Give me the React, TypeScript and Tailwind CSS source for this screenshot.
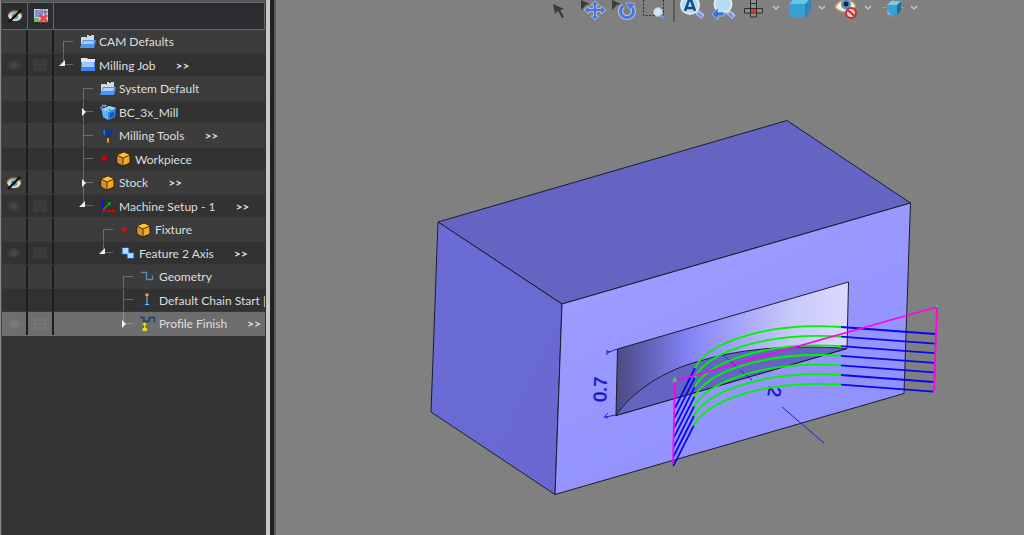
import type { ReactNode } from 'react'

type Joint = 'first' | 'mid' | 'last'

interface TreeItem {
  label: string
  depth: number
  joint: Joint
  icon: ReactNode
  arrow?: 'open' | 'closed'
  more?: boolean
  plus?: boolean
  eye?: 'dim' | 'off'
  grid?: boolean
  selected?: boolean
}

/* ---------- tree icons ---------- */

const OpenFolder = () => (
  <svg className="w-4 h-4 shrink-0" viewBox="0 0 16 16">
    <path d="M1 6V3h5l1 1V1h2v1h2V1h3v12H1z" fill="#d5dae2" />
    <path d="M3 6h13l-2 8H0z" fill="#4f93f5" />
    <path d="M4 7h10l-1 3H2z" fill="#a8d0ff" />
  </svg>
)

const Folder = () => (
  <svg className="w-4 h-4 shrink-0" viewBox="0 0 16 16">
    <path d="M1 1h6l1 1h7v12H1z" fill="#e3e6ec" />
    <path d="M1 5h14v9H1z" fill="#3f86f2" />
    <path d="M2 5h12v5H2z" fill="#9cc8ff" />
  </svg>
)

const Machine = () => (
  <svg className="w-4 h-4 shrink-0" viewBox="0 0 16 16">
    <path d="M2 5l7-3 7 2-1 9-6 3-6-3z" fill="#2f86e8" />
    <path d="M2 6l6 2v8l-5-3z" fill="#5fb4ff" />
    <path d="M2 5l7-3 7 2-7 4z" fill="#9fd4ff" />
    <circle cx="4" cy="4" r="2.500" fill="none" stroke="#8cc8ff" strokeWidth="2" strokeDasharray="1.4 1" />
    <path d="M8 5l4 1-3 1z" fill="#1d8f4a" />
    <path d="M10 9l4-1v4l-4 2z" fill="#1755ae" />
  </svg>
)

const MillTool = () => (
  <svg className="w-4 h-4 shrink-0" viewBox="0 0 16 16">
    <path d="M2 1h11v4h-1v2l-2 3H6L4 7V5H2z" fill="#123c7e" />
    <path d="M3 2l2 0v5l-1 0z" fill="#2c7fc4" />
    <path d="M7 10h2v4l-1 1-1-1z" fill="#e8a020" />
  </svg>
)

const Cube = () => (
  <svg className="w-4 h-4 shrink-0" viewBox="0 0 16 16">
    <path d="M8 1l6 3v8l-7 3-6-3V4z" fill="#f5a922" stroke="#2a1c00" />
    <path d="M1.500 4.500L7 7v7.500l-5.500-3z" fill="#d8902a" />
    <path d="M1.500 4L8 1.500 13.500 4 7 6.500z" fill="#ffc03a" />
    <path d="M1 4l6 3 7-3M7 7v8" fill="none" stroke="#3a2600" strokeWidth="0.900" />
  </svg>
)

const Axes = () => (
  <svg className="w-4 h-4 shrink-0" viewBox="0 0 16 16">
    <path d="M2.500 13V3" stroke="#0a0aff" strokeWidth="1.600" />
    <path d="M.5 4l2-3.500L4.500 4z" fill="#0a0aff" />
    <path d="M3 12l6-6" stroke="#10a020" strokeWidth="1.600" />
    <path d="M7 4.500l4-.5-.5 4z" fill="#10a020" />
    <path d="M2 13h10" stroke="#e00000" strokeWidth="1.600" />
    <path d="M12 11l4 2-4 2z" fill="#e00000" />
  </svg>
)

const Feature = () => (
  <svg className="w-4 h-4 shrink-0" viewBox="0 0 16 16">
    <path d="M2 2.500h7v5h5v6H7v-4H2z" fill="#8fc2ff" stroke="#1c4fa0" />
    <path d="M3 3h5v5H3zM8 9h5v4H8z" fill="#b5dbff" />
  </svg>
)

const Geometry = () => (
  <svg className="w-4 h-4 shrink-0" viewBox="0 0 16 16">
    <path d="M1 3.500h5.500v7h6v-4" fill="none" stroke="#4a90c8" strokeWidth="1.300" />
  </svg>
)

const ChainStart = () => (
  <svg className="w-4 h-4 shrink-0" viewBox="0 0 16 16">
    <circle cx="7" cy="3" r="1.800" fill="#f0a030" />
    <path d="M7 5v8" stroke="#4f9cd0" strokeWidth="1.500" />
    <path d="M5 12h4v1H5z" fill="#7cc0ee" />
    <path d="M0 14h14" stroke="#123c78" strokeWidth="1.500" />
  </svg>
)

const Profile = () => (
  <svg className="w-4 h-4 shrink-0" viewBox="0 0 16 16">
    <path d="M0 1.500h4v4h5v-3h1v-1h4.500v5" fill="none" stroke="#173e78" strokeWidth="1.500" />
    <path d="M4.500 6l2.500 3H5.500v3h1.500v3H2.500v-3H4V9H2z" fill="#e0d828" />
  </svg>
)

const EyeOff = () => (
  <svg className="w-4 h-4" viewBox="0 0 16 16">
    <path d="M1 8c1-4 4-4 7-4s6 1 7 4c-1 4-4 5-7 5S2 11 1 8z" fill="#e9dcc0" />
    <path d="M1 7c2-3 4-4 7-4s5 1 7 4" fill="none" stroke="#a87c48" strokeWidth="1.500" />
    <circle cx="8" cy="8" r="3.500" fill="#58a9d0" />
    <circle cx="8" cy="8" r="1.500" fill="#102a3a" />
    <path d="M2 14L14 2" stroke="#080808" strokeWidth="2" />
  </svg>
)

const EyeDim = () => (
  <svg className="w-4 h-4" viewBox="0 0 16 16">
    <path d="M1 8c1-3 4-5 7-5s6 2 7 5c-1 3-4 5-7 5S2 11 1 8z" className="fill-white/5" />
    <circle cx="8" cy="8" r="3" className="fill-white/5" />
  </svg>
)

const GridDim = () => (
  <svg className="w-4 h-4" viewBox="0 0 16 16">
    <path d="M1 2h14v12H1z" className="fill-white/5" />
    <path d="M1 6h14M1 10h14M6 2v12M10 2v12" className="stroke-black/5" />
  </svg>
)

const GridOff = () => (
  <svg className="w-4 h-4" viewBox="0 0 16 16">
    <path d="M1 1h14v13H1z" fill="#c6cbe4" />
    <path d="M2 2h6v7H2z" fill="#7f8fd8" />
    <path d="M1 10h5v4H1z" fill="#74b85c" />
    <path d="M9 1v6M12 1v6M9 4h6" stroke="#5b5f78" />
    <path d="M7 7l7 7M14 7l-7 7" stroke="#f04050" strokeWidth="3" />
  </svg>
)

const PAD = ['pl-[2px]', 'pl-[22px]', 'pl-[42px]', 'pl-[62px]']

const items: TreeItem[] = [
  { label: 'CAM Defaults', depth: 0, joint: 'first', icon: <OpenFolder /> },
  { label: 'Milling Job', depth: 0, joint: 'last', icon: <Folder />, arrow: 'open', more: true, eye: 'dim', grid: true },
  { label: 'System Default', depth: 1, joint: 'first', icon: <OpenFolder /> },
  { label: 'BC_3x_Mill', depth: 1, joint: 'mid', icon: <Machine />, arrow: 'closed' },
  { label: 'Milling Tools', depth: 1, joint: 'mid', icon: <MillTool />, more: true },
  { label: 'Workpiece', depth: 1, joint: 'mid', icon: <Cube />, plus: true },
  { label: 'Stock', depth: 1, joint: 'mid', icon: <Cube />, arrow: 'closed', more: true, eye: 'off' },
  { label: 'Machine Setup - 1', depth: 1, joint: 'last', icon: <Axes />, arrow: 'open', more: true, eye: 'dim', grid: true },
  { label: 'Fixture', depth: 2, joint: 'first', icon: <Cube />, plus: true },
  { label: 'Feature 2 Axis', depth: 2, joint: 'last', icon: <Feature />, arrow: 'open', more: true, eye: 'dim', grid: true },
  { label: 'Geometry', depth: 3, joint: 'first', icon: <Geometry /> },
  { label: 'Default Chain Start |', depth: 3, joint: 'mid', icon: <ChainStart /> },
  { label: 'Profile Finish', depth: 3, joint: 'last', icon: <Profile />, arrow: 'closed', more: true, eye: 'dim', grid: true, selected: true },
]

const Connector = ({ joint, arrow }: { joint: Joint; arrow?: 'open' | 'closed' }) => (
  <svg className="w-6 h-6 shrink-0" viewBox="0 0 24 24">
    <path
      d={joint === 'first' ? 'M7.500 24V11.500H17' : joint === 'mid' ? 'M7.500 0V24M7.500 11.500H17' : 'M7.500 0V11.500H17'}
      fill="none"
      className="stroke-white/25"
    />
    {arrow === 'open' && <path d="M9 7v6H3z" fill="#eeeeee" />}
    {arrow === 'closed' && <path d="M6 8l4 4-4 4z" fill="#eeeeee" />}
  </svg>
)

const TreeRow = ({ item }: { item: TreeItem }) => (
  <li
    className={`flex h-[23px] odd:h-6 border-b ${
      item.selected ? 'bg-[#6e6e6e] border-[#6e6e6e]' : 'odd:bg-[#3c3c3c] even:bg-[#323232] border-[#393939]'
    }`}
  >
    <div className="w-[26px] shrink-0 flex items-center justify-center border-r-2 border-[#1c1c1c]">
      {item.eye === 'off' && <EyeOff />}
      {item.eye === 'dim' && <EyeDim />}
    </div>
    <div className="w-[26px] shrink-0 flex items-center justify-center border-r-2 border-[#1c1c1c]">
      {item.grid && <GridDim />}
    </div>
    <div className={`flex-1 min-w-0 flex items-center overflow-hidden ${PAD[item.depth]}`}>
      <Connector joint={item.joint} arrow={item.arrow} />
      {item.plus && (
        <svg className="w-4 h-4 shrink-0" viewBox="0 0 16 16">
          <path d="M1 7.500h6M4 4.500v6" stroke="#f00000" strokeWidth="1.600" />
        </svg>
      )}
      {item.icon}
      <span className="pl-[3px] pt-px whitespace-nowrap">{item.label}</span>
      {item.more && <button className="ml-5 pt-px font-bold">&gt;&gt;</button>}
    </div>
  </li>
)

/* ---------- view toolbar ---------- */

const Chevron = () => (
  <svg className="w-2 h-[22px]" viewBox="0 0 8 22">
    <path d="M1 6l3 3 3-3" fill="none" stroke="#c4c4c4" strokeWidth="1.500" />
  </svg>
)

const Cursor = () => <path d="M1 0l9 4-4 1-5 5z" fill="#3c3c3c" />

interface Tool {
  name: string
  art: ReactNode
}

const pointerTools: Tool[] = [
  { name: 'Select', art: <path d="M4 4l11 5-4 1 4 7-2 1-4-7-3 3z" fill="#3a3a3a" /> },
  {
    name: 'Pan',
    art: (
      <>
        <Cursor />
        <path
          d="M15 1l4 4h-2.500v3.500H21V6l5 4-5 4v-2.500h-4.500V16H19l-4 4-4-4h2.500v-4.500H9V14l-5-4 5-4v2.500h4.500V5H11z"
          fill="#4577d8"
          stroke="#b4ccf4"
          strokeWidth="0.800"
        />
      </>
    ),
  },
  {
    name: 'Rotate',
    art: (
      <>
        <path d="M12 6a6.500 6.500 0 1 0 8 0" fill="none" stroke="#b4ccf4" strokeWidth="5" />
        <path d="M12 6a6.500 6.500 0 1 0 8 0" fill="none" stroke="#4577d8" strokeWidth="3" />
        <path d="M15 3h8v2l-4 5z" fill="#4577d8" stroke="#b4ccf4" strokeWidth="0.600" />
        <Cursor />
      </>
    ),
  },
  {
    name: 'Zoom to area',
    art: (
      <>
        <path d="M1.500 0v15.500h20V0" fill="none" stroke="#2c2c2c" strokeDasharray="2 1.500" />
        <circle cx="16" cy="12" r="4.500" fill="#cfe8f0" stroke="#9fb4bc" />
        <path d="M19 15l3 3" stroke="#6e96e4" strokeWidth="3" />
      </>
    ),
  },
]

const zoomTools: Tool[] = [
  {
    name: 'Zoom to fit',
    art: (
      <>
        <path d="M17 12l6 5" stroke="#b9ccf4" strokeWidth="5" />
        <path d="M18 13l4 4" stroke="#6e96e4" strokeWidth="3" />
        <circle cx="10" cy="5" r="9" fill="#b4dff0" stroke="#dfe9ec" strokeWidth="2" />
        <path d="M5 11l4-11h2l4 11M7 8h6" fill="none" stroke="#174a8c" strokeWidth="2.500" />
      </>
    ),
  },
  {
    name: 'Previous view',
    art: (
      <>
        <path d="M17 12l6 5" stroke="#b9ccf4" strokeWidth="5" />
        <path d="M18 13l4 4" stroke="#6e96e4" strokeWidth="3" />
        <circle cx="12" cy="4" r="8.500" fill="#b4dff0" stroke="#dfe9ec" strokeWidth="2" />
        <path d="M1 14l6-6v4h6v4H7v4z" fill="#3f70da" stroke="#b4ccf4" strokeWidth="0.800" />
      </>
    ),
  },
]

const displayTools: Tool[] = [
  {
    name: 'Section view',
    art: (
      <>
        <path d="M8.500 0v17h6V0M2.500 8.500h18v4.500h-18z" fill="#8c8c8c" stroke="#2c2c2c" />
        <path d="M9 9h5v3.500H9z" fill="#e83030" />
        <path d="M8.500 3.500h6" stroke="#2c2c2c" />
      </>
    ),
  },
  {
    name: 'View orientation',
    art: (
      <>
        <path d="M1 4l6-6h16v12l-6 8H1z" fill="#2f86b4" />
        <path d="M1 4h16v14H1z" fill="#36a0d0" />
        <path d="M1 4l6-6h16l-6 6z" fill="#6cc4e8" />
      </>
    ),
  },
  {
    name: 'Hide/show items',
    art: (
      <>
        <path d="M1 7c3-6 7-7 11-7s8 2 10 6c-3 4-6 6-10 6S4 11 1 7z" fill="#f3eee4" stroke="#c69a62" strokeWidth="1.500" />
        <circle cx="12" cy="4.500" r="5" fill="#5596c8" />
        <circle cx="12" cy="4" r="2.500" fill="#10263a" />
        <circle cx="17" cy="13" r="5" fill="#e8c8c8" stroke="#c03030" strokeWidth="2" />
        <path d="M13.500 10l7 6" stroke="#c03030" strokeWidth="2" />
      </>
    ),
  },
  {
    name: 'View settings',
    art: (
      <>
        <path d="M13 0v18M2 7.500h22" stroke="#c88484" />
        <path d="M7 5l4-4h10v9l-4 5H7z" fill="#1f6f9c" />
        <path d="M7 5h10v10H7z" fill="#38a0d0" />
        <path d="M7 5l4-4h10l-4 4z" fill="#78cce8" />
        <path d="M8 11v3h3" fill="none" stroke="#a8c0d0" />
      </>
    ),
  },
]

const ToolButton = ({ name, art, menu }: Tool & { menu?: boolean }) => (
  <button aria-label={name} className="flex gap-1">
    <svg className="w-[26px] h-[22px]" viewBox="0 0 26 22">
      {art}
    </svg>
    {menu && <Chevron />}
  </button>
)

/* ---------- part and toolpath ---------- */

const passes = [0, 1, 2, 3, 4, 5, 6]

const Part = () => (
  <svg className="w-full flex-1 min-h-0" viewBox="276 22 748 513" strokeLinejoin="round">
    <defs>
      <linearGradient id="front" x1="0" y1="0" x2="0.600" y2="1">
        <stop offset="0" stopColor="#a6a6ff" />
        <stop offset="0.400" stopColor="#9999ff" />
        <stop offset="1" stopColor="#9090fb" />
      </linearGradient>
      <linearGradient id="side" x1="0" y1="0" x2="1" y2="1">
        <stop offset="0" stopColor="#6c6cd8" />
        <stop offset="1" stopColor="#6868cf" />
      </linearGradient>
      <linearGradient id="wall" x1="0" x2="1" y1="0" y2="0">
        <stop offset="0" stopColor="#4a4a82" />
        <stop offset="0.150" stopColor="#6464bc" />
        <stop offset="0.320" stopColor="#8484f8" />
        <stop offset="0.500" stopColor="#a0a0fa" />
        <stop offset="0.750" stopColor="#c8c8fc" />
        <stop offset="1" stopColor="#dadaff" />
      </linearGradient>
    </defs>

    <g stroke="#1c1c30">
      <path d="M438 222L787 120.500 910.500 203 562 304z" fill="#6464c2" />
      <path d="M438 222L562 304 555 494.500 431 412z" fill="url(#side)" />
      <path d="M562 304L910.500 203 904 393.500 555 494.500z" fill="url(#front)" />
      <path d="M617.500 349L848.500 282 847 348.500 616 415.500z" fill="url(#wall)" />
      <path d="M616 415.500C632 392 664 370 700 361C745 347 800 345 847 348.500z" fill="#6464c2" />
    </g>

    {/* dimensions */}
    <g stroke="#2020dd" fill="none">
      <path d="M617 349l-10 4M607 350v5M607 351l3 1" />
      <path d="M616 415l-11 2M608 413l-4 4 4 1" />
      <path d="M723 355l14 12M740 370l12 10M782 407l42 36" />
    </g>
    <g fill="#1414cc" stroke="#1414cc" strokeWidth="0.600" className="font-['Liberation_Sans']">
      <text transform="translate(606 402) rotate(-88)" fontSize="18">0.7</text>
      <text transform="translate(769 386) rotate(98)" fontSize="18">2</text>
    </g>

    <g fill="none" strokeWidth="1.800">
      {passes.map(i => (
        <path
          key={i}
          stroke="#0808f0"
          d={`M${695 - i * 0.2} ${368 + i * 9.6}L${675 - i * 0.3} ${408 + i * 9.7}M841 ${327 + i * 9.6}L${935 - i * 0.3} ${334 + i * 9.6}`}
        />
      ))}
      {passes.map(i => (
        <path
          key={i}
          stroke="#00f400"
          d={`M${695 - i * 0.2} ${368 + i * 9.6}C${708} ${342 + i * 9.6} ${768} ${322 + i * 9.6} 841 ${327 + i * 9.6}`}
        />
      ))}
      <path d="M673 464l2-83L937 307l-3 84" stroke="#ff00ee" />
      <path d="M673 382l2-4 1 4M936 306h2" stroke="#30e030" />
    </g>
  </svg>
)

const App = () => {
  return (
    <div className="min-h-screen flex bg-[#808080]">
      {/* CAM tree */}
      <aside className="w-[276px] shrink-0 flex bg-[#343434] text-[#dedede] text-[12px] leading-4 font-[Lato,sans-serif]">
        <div className="w-[2px] bg-[#8a8a8a] border-r border-[#444444]" />
        <div className="flex-1 min-w-0 border-t-2 border-[#555555]">
          <div className="flex h-7 mr-px bg-[#2c2d31] border border-l-0 border-[#666666]">
            <div className="w-[26px] flex items-center justify-center border-r border-[#666666]">
              <EyeOff />
            </div>
            <div className="w-[26px] flex items-center justify-center border-r border-[#666666]">
              <GridOff />
            </div>
          </div>
          <ul className="mr-px">
            {items.map(item => (
              <TreeRow key={item.label} item={item} />
            ))}
          </ul>
        </div>
        {/* splitter */}
        <div className="w-1 bg-[#c8c8c8]" />
        <div className="w-1 bg-[#222222]" />
        <div className="w-[2px] bg-[#5a5a5a]" />
      </aside>

      {/* Graphics area */}
      <main className="flex-1 min-w-0 flex flex-col">
        <div className="flex gap-[5px] self-end mr-[106px]">
          {pointerTools.map(t => (
            <ToolButton key={t.name} {...t} />
          ))}
          <div className="w-[2px] bg-[#5c5c5c]" />
          {zoomTools.map(t => (
            <ToolButton key={t.name} {...t} />
          ))}
          <div className="flex gap-2">
            {displayTools.map(t => (
              <ToolButton key={t.name} {...t} menu />
            ))}
          </div>
        </div>
        <Part />
      </main>
    </div>
  )
}

export default App
